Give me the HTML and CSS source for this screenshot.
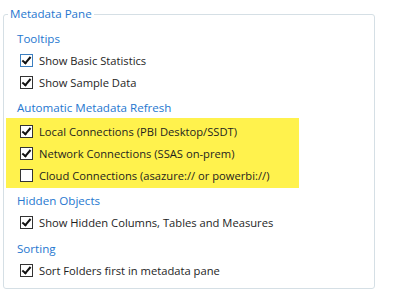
FILE: index.html
```html
<!DOCTYPE html>
<html lang="en">
<head>
    <meta charset="UTF-8">
    <title>Metadata Pane Options</title>
    <link rel="stylesheet" href="styles.css">
</head>
<body>

<fieldset class="group">
    <legend>Metadata Pane</legend>

    <div class="section-title first">Tooltips</div>
    <label class="option"><span class="box focus checked"></span>Show Basic Statistics</label>
    <label class="option"><span class="box checked"></span>Show Sample Data</label>

    <div class="section-title">Automatic Metadata Refresh</div>
    <div class="highlight">
        <label class="option"><span class="box checked"></span>Local Connections (PBI Desktop/SSDT)</label>
        <label class="option"><span class="box checked"></span>Network Connections (SSAS on-prem)</label>
        <label class="option"><span class="box"></span>Cloud Connections (asazure:// or powerbi://)</label>
    </div>

    <div class="section-title hidden-objects">Hidden Objects</div>
    <label class="option"><span class="box checked"></span>Show Hidden Columns, Tables and Measures</label>

    <div class="section-title sorting">Sorting</div>
    <label class="option"><span class="box checked"></span>Sort Folders first in metadata pane</label>
</fieldset>

</body>
</html>
```

FILE: styles.css
```css
body {
    margin: 0;
    background-color: #fff;
    font-family: "Open Sans", "Noto Sans", sans-serif;
    font-size: 11.2px;
    color: #1e1e1e;
}
.group {
    width: 372px;
    margin: 6px 0 0 3px;
    padding: 0 0 6px 0;
    border: 1px solid #d5dfe5;
    border-radius: 3px;
    box-sizing: border-box;
    height: 283px;
}
.group legend {
    margin-left: 4px;
    padding: 0 2px;
    line-height: 16px;
    font-size: 11.6px;
    color: #2677cf;
}
.section-title {
    height: 20px;
    line-height: 20px;
    padding-left: 13px;
    margin-top: 5px;
    font-size: 11.6px;
    color: #2677cf;
}
.section-title.first {
    margin-top: 7px;
}
.section-title.hidden-objects {
    margin-top: 3px;
}
.section-title.sorting {
    margin-top: 6px;
}
.option {
    display: flex;
    align-items: center;
    height: 22px;
    padding-left: 16px;
}
.highlight {
    margin-left: 2px;
    width: 293px;
    padding: 2px 0;
    background-color: #fff24d;
}
.highlight .option {
    padding-left: 14px;
}
.box {
    width: 13px;
    height: 13px;
    box-sizing: border-box;
    border: 1px solid #333;
    background-color: #fff;
    margin-right: 6px;
    flex-shrink: 0;
    position: relative;
}
.box.focus {
    border-color: #3c7fc0;
}
.box.checked::after {
    content: "";
    position: absolute;
    left: 3px;
    top: 0;
    width: 3px;
    height: 7px;
    border: solid #111;
    border-width: 0 2px 2px 0;
    transform: rotate(40deg);
}
```
